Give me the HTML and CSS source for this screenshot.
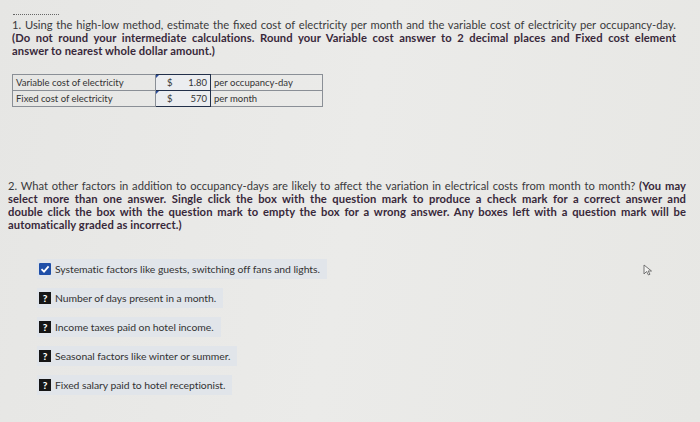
FILE: index.html
```html
<!DOCTYPE html>
<html>
<head>
<meta charset="utf-8">
<link rel="stylesheet" href="styles.css">
</head>
<body>
<div class="page">
  <div class="dots"></div>
  <div class="q q1">
    <span class="ln">1. Using the high-low method, estimate the fixed cost of electricity per month and the variable cost of electricity per occupancy-day.</span>
    <span class="ln b">(Do not round your intermediate calculations. Round your Variable cost answer to 2 decimal places and Fixed cost element</span>
    <span class="end b">answer to nearest whole dollar amount.)</span>
  </div>
  <table class="tbl">
    <tr>
      <td class="lbl">Variable cost of electricity</td>
      <td class="inp"><span class="cur">$</span><span class="val">1.80</span></td>
      <td class="unit">per occupancy-day</td>
    </tr>
    <tr>
      <td class="lbl">Fixed cost of electricity</td>
      <td class="inp"><span class="cur">$</span><span class="val">570</span></td>
      <td class="unit">per month</td>
    </tr>
  </table>
  <div class="q q2">
    <span class="ln">2. What other factors in addition to occupancy-days are likely to affect the variation in electrical costs from month to month? <b>(You may</b></span>
    <span class="ln b">select more than one answer. Single click the box with the question mark to produce a check mark for a correct answer and</span>
    <span class="ln b">double click the box with the question mark to empty the box for a wrong answer. Any boxes left with a question mark will be</span>
    <span class="end b">automatically graded as incorrect.)</span>
  </div>
  <div class="opts">
    <div class="opt"><span class="box chk"><svg width="12" height="12" viewBox="0 0 12 12"><path d="M2.5 6.2 L5 8.6 L9.6 3.4" fill="none" stroke="#fff" stroke-width="1.8"/></svg></span>Systematic factors like guests, switching off fans and lights.</div>
    <div class="opt"><span class="box qm">?</span>Number of days present in a month.</div>
    <div class="opt"><span class="box qm">?</span>Income taxes paid on hotel income.</div>
    <div class="opt"><span class="box qm">?</span>Seasonal factors like winter or summer.</div>
    <div class="opt"><span class="box qm">?</span>Fixed salary paid to hotel receptionist.</div>
  </div>
  <svg class="cursor" width="10" height="12" viewBox="0 0 10 12"><path d="M1 1 L1 10 L3.5 7.5 L5.5 11 L7 10.2 L5 7 L8.5 7 Z" fill="#f4f4f2" stroke="#666" stroke-width="0.9"/></svg>
</div>
</body>
</html>
```
FILE: styles.css
```css
html, body {
  margin: 0;
  padding: 0;
}
body {
  width: 700px;
  height: 422px;
  overflow: hidden;
  background: linear-gradient(100deg, #e6e6e4 0%, #ebebe9 50%, #e7e7e4 100%);
  font-family: Lato, "Open Sans", sans-serif;
  color: #3a3a3c;
  position: relative;
}
.page {
  padding: 14px 0 0 0;
}
.dots {
  width: 46px;
  height: 0;
  border-top: 1px dotted #666;
  margin: 0 0 3px 13px;
}
.q {
  font-size: 11.2px;
  line-height: 13px;
  letter-spacing: 0;
}
.q1 {
  margin-left: 12px;
  width: 664px;
}
.q2 {
  margin-top: 72px;
  margin-left: 8px;
  width: 678px;
}
.ln, .end {
  display: block;
  white-space: nowrap;
}
.ln {
  text-align: justify;
  text-align-last: justify;
  white-space: normal;
}
.b, .q b {
  color: #38283a;
  font-weight: 700;
  letter-spacing: 0.1px;
}
.tbl {
  border-collapse: collapse;
  margin: 17px 0 0 12px;
  font-size: 9.5px;
  width: 311px;
}
.tbl td {
  border: 1px solid #8a8f96;
  height: 15px;
  padding: 0 3px;
  color: #333;
}
.lbl {
  width: 136px;
}
.inp {
  width: 48px;
  border: 1.5px solid #22304a !important;
  background: #ebedf0;
  position: relative;
}
.inp::before {
  content: "";
  position: absolute;
  left: 0;
  top: 0;
  border-left: 3px solid #2a4b9a;
  border-bottom: 3px solid transparent;
}
.inp .cur {
  padding-left: 8px;
}
.inp .val {
  float: right;
}
.unit {
  width: 105px;
}
.opts {
  margin-top: 28px;
  margin-left: 37px;
  display: flex;
  flex-direction: column;
  align-items: flex-start;
  gap: 9px;
}
.opt {
  display: flex;
  align-items: center;
  height: 20px;
  padding: 0 7px 0 2px;
  background: #e1e5ea;
  font-size: 10.4px;
  color: #333;
  letter-spacing: -0.05px;
}
.box {
  width: 12px;
  height: 12px;
  margin-right: 4px;
  display: flex;
  align-items: center;
  justify-content: center;
  flex: none;
}
.chk {
  background: #1f4fa8;
  border-radius: 1px;
}
.qm {
  background: #161616;
  color: #fff;
  font-weight: 900;
  font-size: 10px;
  line-height: 12px;
}
.cursor {
  position: absolute;
  left: 643px;
  top: 264px;
}
```
